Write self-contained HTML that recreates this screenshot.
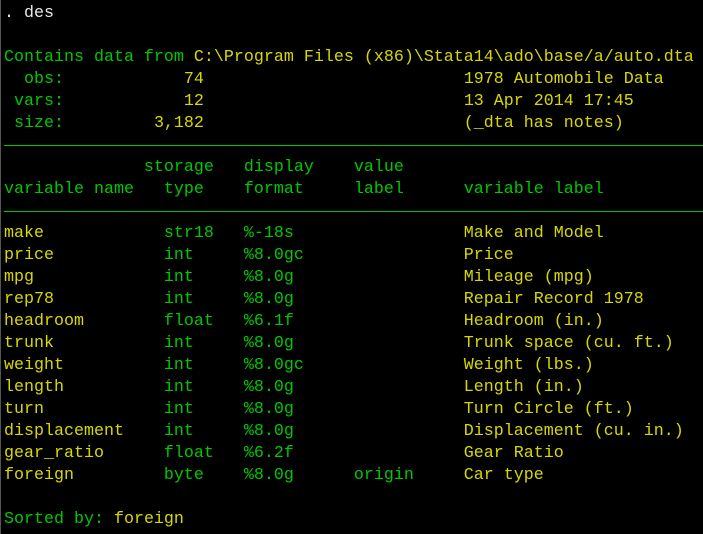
<!DOCTYPE html>
<html><head><style>
html,body{margin:0;padding:0;background:#000;width:703px;height:534px;overflow:hidden}
body{border-left:1px solid #555;box-sizing:border-box}
pre{margin:0;position:absolute;left:4px;top:3px;font-family:"Liberation Mono",monospace;font-size:16.67px;line-height:22px;color:#00c800}
.y{color:#d8d800}.w{color:#e8e8e8}
.hr{position:absolute;left:4px;width:699px;height:1px;background:#00c800}
</style></head><body>
<pre><span class="w">. des</span>

Contains data from <span class="y">C:\Program Files (x86)\Stata14\ado\base/a/auto.dta</span>
  obs:            <span class="y">74</span>                          <span class="y">1978 Automobile Data</span>
 vars:            <span class="y">12</span>                          <span class="y">13 Apr 2014 17:45</span>
 size:         <span class="y">3,182</span>                          <span class="y">(_dta has notes)</span>

              storage   display    value
variable name   type    format     label      variable label

<span class="y">make           </span> str18   %-18s                 <span class="y">Make and Model</span>
<span class="y">price          </span> int     %8.0gc                <span class="y">Price</span>
<span class="y">mpg            </span> int     %8.0g                 <span class="y">Mileage (mpg)</span>
<span class="y">rep78          </span> int     %8.0g                 <span class="y">Repair Record 1978</span>
<span class="y">headroom       </span> float   %6.1f                 <span class="y">Headroom (in.)</span>
<span class="y">trunk          </span> int     %8.0g                 <span class="y">Trunk space (cu. ft.)</span>
<span class="y">weight         </span> int     %8.0gc                <span class="y">Weight (lbs.)</span>
<span class="y">length         </span> int     %8.0g                 <span class="y">Length (in.)</span>
<span class="y">turn           </span> int     %8.0g                 <span class="y">Turn Circle (ft.)</span>
<span class="y">displacement   </span> int     %8.0g                 <span class="y">Displacement (cu. in.)</span>
<span class="y">gear_ratio     </span> float   %6.2f                 <span class="y">Gear Ratio</span>
<span class="y">foreign        </span> byte    %8.0g      origin     <span class="y">Car type</span>

Sorted by: <span class="y">foreign</span></pre>
<div class="hr" style="top:145px"></div>
<div class="hr" style="top:211px"></div>
</body></html>
